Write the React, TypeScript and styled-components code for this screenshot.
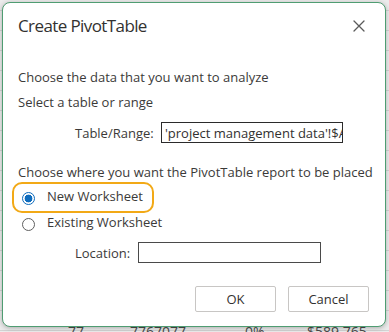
import React from 'react'
import styled, { createGlobalStyle } from 'styled-components'

const GlobalStyle = createGlobalStyle`
  html, body {
    margin: 0;
    padding: 0;
  }
  body {
    font-family: 'Open Sans', 'Noto Sans', sans-serif;
    background: #e9e9e9;
  }
`

const Sheet = styled.div`
  position: relative;
  width: 389px;
  height: 332px;
  overflow: hidden;
  display: flex;
  flex-direction: column;
  justify-content: flex-end;
  background-color: #ececec;
  background-image: linear-gradient(to bottom, #d3d3d3 1px, transparent 1px);
  background-size: 100% 20px;
  background-position: 0 10px;
`

const DataRow = styled.div`
  display: grid;
  grid-template-columns: 68px 62px 115px 62px 1fr;
  height: 20px;
  margin-bottom: -10px;
  font-size: 14px;
  line-height: 20px;
  color: #4a4a4a;
`

const Dialog = styled.div`
  position: absolute;
  top: 2px;
  left: 2px;
  width: 384px;
  box-sizing: border-box;
  border: 1px solid #4f9d72;
  border-radius: 8px;
  background: #ffffff;
  box-shadow: 0 1px 5px rgba(0, 0, 0, 0.28);
  padding: 11px 16px 14px 15px;
  display: flex;
  flex-direction: column;
  color: #3b3a39;
  font-size: 13px;
  line-height: 20px;
`

const TitleBar = styled.div`
  display: flex;
  justify-content: space-between;
  align-items: center;
  height: 24px;
`

const Title = styled.h1`
  margin: 0;
  font-size: 17px;
  font-weight: 400;
  letter-spacing: -0.6px;
  line-height: 24px;
  color: #323130;
`

const CloseButton = styled.button`
  width: 20px;
  height: 20px;
  padding: 0;
  border: none;
  background: transparent;
  display: flex;
  align-items: center;
  justify-content: center;
  color: #5a5a5a;
`

const Text = styled.div<{ $gap: number }>`
  margin-top: ${p => p.$gap}px;
  height: 20px;
  white-space: nowrap;
`

const FieldRow = styled.div<{ $gap: number }>`
  display: flex;
  align-items: center;
  margin-top: ${p => p.$gap}px;
  padding-left: 57px;
  height: 21px;
`

const FieldLabel = styled.label<{ $width: number }>`
  width: ${p => p.$width}px;
  flex: none;
  white-space: nowrap;
`

const Field = styled.input<{ $dark?: boolean }>`
  box-sizing: border-box;
  width: ${p => (p.$dark ? 182 : 183)}px;
  height: 21px;
  margin: 0;
  padding: 0 0 0 3px;
  border: 1px solid ${p => (p.$dark ? '#2b2b2b' : '#4a4a4a')};
  border-radius: 0;
  font-family: inherit;
  font-size: 13px;
  color: #323130;
  background: #fff;
  outline: none;
`

const RadioRow = styled.label<{ $highlight?: boolean; $gap: number }>`
  display: flex;
  align-items: flex-start;
  gap: 12px;
  box-sizing: border-box;
  align-self: flex-start;
  margin-top: ${p => p.$gap}px;
  margin-left: ${p => (p.$highlight ? -6 : 0)}px;
  height: ${p => (p.$highlight ? 31 : 20)}px;
  padding: ${p => (p.$highlight ? '1.5px 9px 5.5px 8px' : '0 0 0 4px')};
  border: ${p => (p.$highlight ? '2px solid #f2a916' : 'none')};
  border-radius: 10px;
  white-space: nowrap;
`

const RadioDot = styled.span<{ $checked?: boolean }>`
  flex: none;
  box-sizing: border-box;
  width: 13px;
  height: 13px;
  margin-top: 6px;
  border-radius: 50%;
  border: 1px solid ${p => (p.$checked ? '#0f6cbd' : '#5f5f5f')};
  background: ${p => (p.$checked ? 'radial-gradient(circle, #0f6cbd 0 3.6px, #ffffff 4.2px)' : '#ffffff')};
`

const Actions = styled.div`
  display: flex;
  justify-content: flex-end;
  gap: 12px;
  margin-top: 23px;
`

const Button = styled.button`
  box-sizing: border-box;
  width: 81px;
  height: 26px;
  padding: 0;
  border: 1px solid #c8c6c4;
  border-radius: 2px;
  background: #ffffff;
  font-family: inherit;
  font-size: 13px;
  color: #323130;
`

const CloseIcon = () => (
  <svg width="12" height="12" viewBox="0 0 12 12" fill="none">
    <path d="M1 1 L11 11 M11 1 L1 11" stroke="currentColor" strokeWidth="1.3" strokeLinecap="round" />
  </svg>
)

export default function App() {
  return (
    <>
      <GlobalStyle />
      <Sheet>
        <DataRow>
          <span />
          <span>77</span>
          <span>7767077</span>
          <span>0%</span>
          <span>$589,765</span>
        </DataRow>
        <Dialog role="dialog" aria-label="Create PivotTable">
          <TitleBar>
            <Title>Create PivotTable</Title>
            <CloseButton aria-label="Close">
              <CloseIcon />
            </CloseButton>
          </TitleBar>
          <Text $gap={29}>Choose the data that you want to analyze</Text>
          <Text $gap={5}>Select a table or range</Text>
          <FieldRow $gap={10}>
            <FieldLabel $width={86}>Table/Range:</FieldLabel>
            <Field $dark readOnly value="'project management data'!$A$1:$H$51" />
          </FieldRow>
          <Text $gap={19}>Choose where you want the PivotTable report to be placed</Text>
          <RadioRow $highlight $gap={0}>
            <RadioDot $checked />
            New Worksheet
          </RadioRow>
          <RadioRow $gap={-1.5}>
            <RadioDot />
            Existing Worksheet
          </RadioRow>
          <FieldRow $gap={10.5}>
            <FieldLabel $width={63}>Location:</FieldLabel>
            <Field readOnly value="" />
          </FieldRow>
          <Actions>
            <Button>OK</Button>
            <Button>Cancel</Button>
          </Actions>
        </Dialog>
      </Sheet>
    </>
  )
}
